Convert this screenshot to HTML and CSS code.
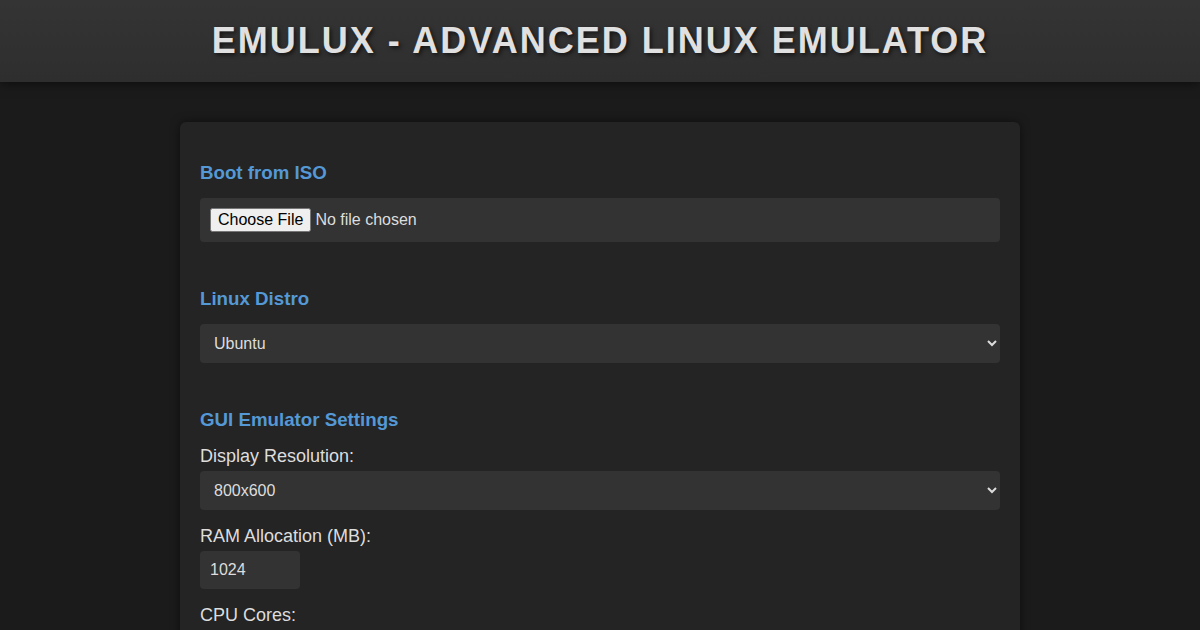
FILE: index.html
```html
<!DOCTYPE html>
<html lang="en">
<head>
<meta charset="utf-8">
<title>Emulux - Advanced Linux Emulator</title>
<link rel="stylesheet" href="styles.css">
</head>
<body>
<header class="site-header">
  <h1 class="title">Emulux - Advanced Linux Emulator</h1>
</header>
<main class="panel">
  <section class="section">
    <h3 class="section-title">Boot from ISO</h3>
    <div class="file-box">
      <input class="file-input" type="file" accept=".iso">
    </div>
  </section>
  <section class="section">
    <h3 class="section-title">Linux Distro</h3>
    <select class="control select">
      <option>Ubuntu</option>
      <option>Debian</option>
      <option>Fedora</option>
      <option>Arch Linux</option>
    </select>
  </section>
  <section class="section">
    <h3 class="section-title">GUI Emulator Settings</h3>
    <label class="field-label">Display Resolution:</label>
    <select class="control select field">
      <option>800x600</option>
      <option>1024x768</option>
      <option>1280x720</option>
    </select>
    <label class="field-label">RAM Allocation (MB):</label>
    <input class="control number field" type="number" value="1024">
    <label class="field-label">CPU Cores:</label>
    <input class="control number field" type="number" value="2">
  </section>
</main>
</body>
</html>
```

FILE: styles.css
```css
html, body {
  margin: 0;
  padding: 0;
}
body {
  background: #1b1b1b;
  color: #dddddd;
  font-family: "Liberation Sans", Arial, sans-serif;
  font-size: 16px;
}
.site-header {
  background: linear-gradient(to bottom, #343434, #2e2e2e);
  padding: 20px 0;
  box-shadow: 0 2px 10px rgba(0, 0, 0, 0.5);
  text-align: center;
}
.title {
  margin: 0;
  font-size: 36px;
  line-height: 42px;
  font-weight: bold;
  text-transform: uppercase;
  letter-spacing: 2px;
  color: #e0e0e0;
  text-shadow: 2px 2px 4px rgba(0, 0, 0, 0.6);
}
.panel {
  max-width: 800px;
  margin: 40px auto 0;
  padding: 20px 20px 20px;
  background: #242424;
  border-radius: 6px;
  box-shadow: 0 0 10px rgba(0, 0, 0, 0.5);
  display: flex;
  flex-direction: column;
}
.section {
  display: flex;
  flex-direction: column;
  align-items: flex-start;
  padding-bottom: 26px;
}
.section-title {
  margin: 20px 0 14px;
  font-size: 18.72px;
  line-height: 22px;
  font-weight: bold;
  color: #5499d6;
}
.file-box {
  align-self: stretch;
  background: #333333;
  border-radius: 4px;
  padding: 10px;
}
.file-input {
  font-family: "Liberation Sans", Arial, sans-serif;
  font-size: 16px;
  color: #dddddd;
  height: 24px;
  display: block;
}
.control {
  font-family: "Liberation Sans", Arial, sans-serif;
  font-size: 16px;
  color: #dddddd;
  background: #333333;
  border: none;
  border-radius: 4px;
  padding: 10px;
  outline: none;
}
.select {
  align-self: stretch;
  height: 39px;
}
.number {
  width: 100px;
  height: 38px;
  box-sizing: border-box;
}
.field {
  margin-bottom: 15px;
}
.field-label {
  display: block;
  font-size: 18px;
  line-height: 21px;
  margin: 1px 0 4px;
  color: #dddddd;
}
```
